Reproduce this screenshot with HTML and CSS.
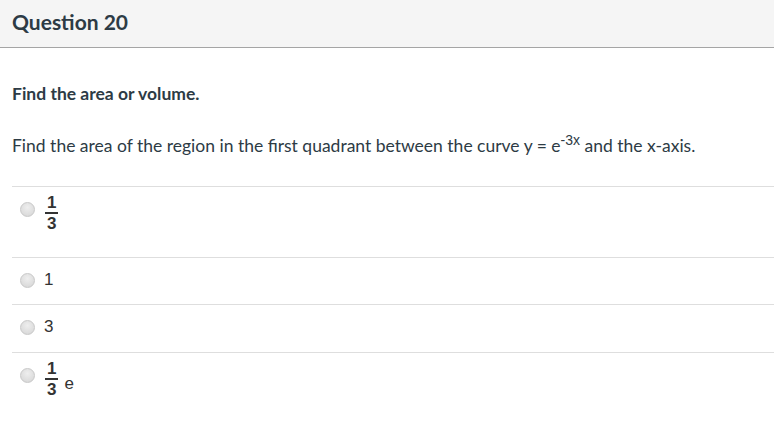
FILE: index.html
```html
<!DOCTYPE html>
<html>
<head>
<meta charset="utf-8">
<link rel="stylesheet" href="styles.css">
</head>
<body>
<div class="header"><h2 class="title">Question 20</h2></div>
<div class="content">
  <p class="lead">Find the area or volume.</p>
  <p class="text">Find the area of the region in the first quadrant between the curve y = e<sup class="sup">-3x</sup> and the x-axis.</p>
  <div class="answers">
    <div class="row row-frac">
      <span class="radio"></span>
      <span class="frac"><span class="num">1</span><span class="den">3</span></span>
    </div>
    <div class="row">
      <span class="radio"></span>
      <span class="val">1</span>
    </div>
    <div class="row row-tall">
      <span class="radio"></span>
      <span class="val">3</span>
    </div>
    <div class="row row-last">
      <span class="radio"></span>
      <span class="frac"><span class="num">1</span><span class="den">3</span></span>
      <span class="val e">e</span>
    </div>
  </div>
</div>
</body>
</html>
```
FILE: styles.css
```css
html, body { margin: 0; padding: 0; background: #fff; }
body { font-family: Lato, "Liberation Sans", sans-serif; color: #2d3b45; }
.header {
  background: #f5f5f5;
  border-bottom: 1px solid #a5a5a5;
  height: 47px;
  padding: 0 12px;
  display: flex;
  align-items: center;
}
.title { margin: 0; font-size: 21px; font-weight: 700; line-height: 1; padding-bottom: 5px; }
.content { padding-left: 12px; }
.lead { margin: 0; padding-top: 35px; font-size: 17.5px; font-weight: 700; line-height: 21px; }
.text { margin: 0; padding-top: 31px; font-size: 17.5px; line-height: 21px; }
.sup { font-family: "Liberation Sans", Arial, sans-serif; font-size: 14px; vertical-align: 0; position: relative; top: -7px; line-height: 0; }
.answers { margin-top: 30px; }
.row {
  border-top: 1px solid #dedede;
  display: flex;
  align-items: flex-start;
  height: 46px;
  box-sizing: content-box;
}
.row-frac { height: 70px; }
.row-tall { height: 47px; }
.row-last { height: 93px; }
.radio {
  width: 13px; height: 13px;
  border-radius: 50%;
  border: 1px solid #c8c8c8;
  background: radial-gradient(circle at 50% 35%, #eee 0%, #dcdcdc 70%, #d0d0d0 100%);
  margin: 15px 0 0 8px;
  flex: none;
}
.val { font-family: "Liberation Sans", Arial, sans-serif; font-size: 17px; line-height: 20px; margin: 12px 0 0 9px; color: #333; }
.frac {
  display: inline-flex; flex-direction: column; align-items: center;
  margin: 7px 0 0 10px;
  font-family: "Liberation Sans", Arial, sans-serif; font-weight: 700; font-size: 17px; color: #333;
}
.num { line-height: 17px; border-bottom: 2px solid #333; padding: 0 2px 1px; }
.den { line-height: 19px; }
.e { font-weight: 400; margin: 21px 0 0 6px; }
```
